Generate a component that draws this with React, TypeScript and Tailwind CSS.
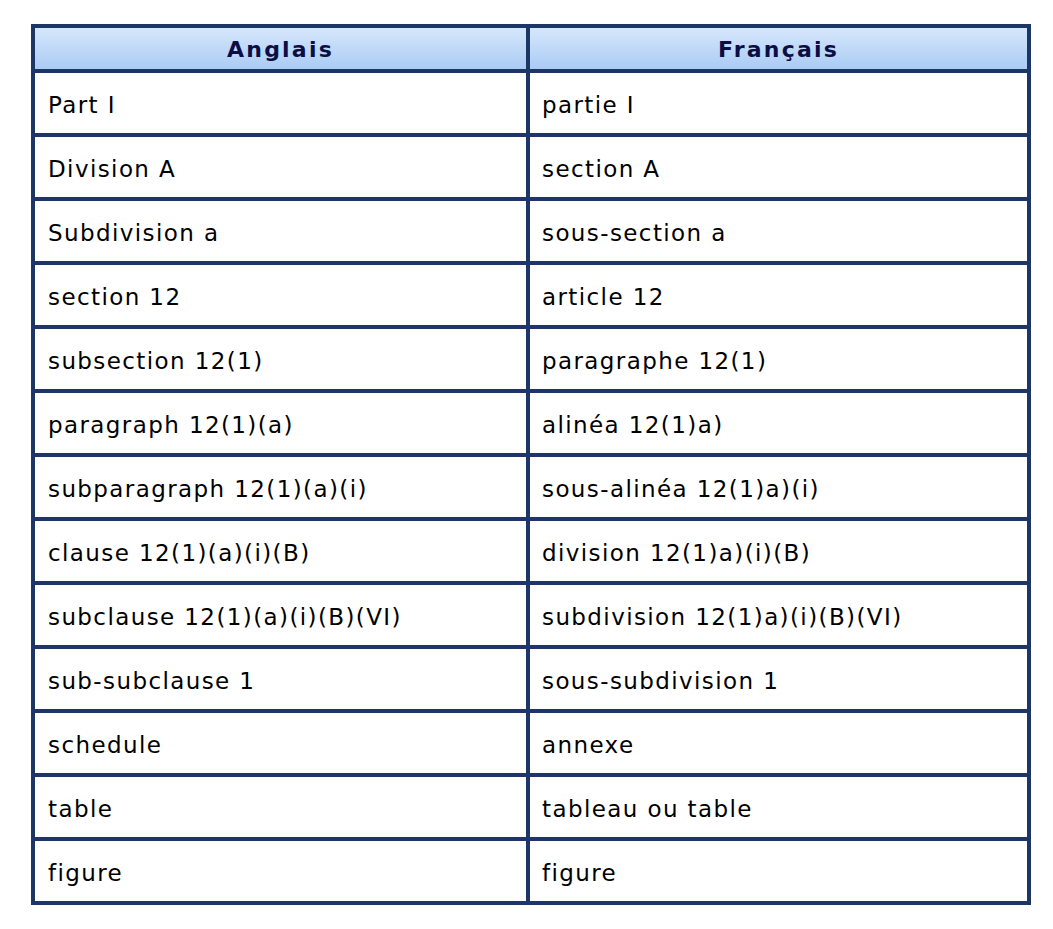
const rows: [string, string][] = [
  ['Part I', 'partie I'],
  ['Division A', 'section A'],
  ['Subdivision a', 'sous-section a'],
  ['section 12', 'article 12'],
  ['subsection 12(1)', 'paragraphe 12(1)'],
  ['paragraph 12(1)(a)', 'alinéa 12(1)a)'],
  ['subparagraph 12(1)(a)(i)', 'sous-alinéa 12(1)a)(i)'],
  ['clause 12(1)(a)(i)(B)', 'division 12(1)a)(i)(B)'],
  ['subclause 12(1)(a)(i)(B)(VI)', 'subdivision 12(1)a)(i)(B)(VI)'],
  ['sub-subclause 1', 'sous-subdivision 1'],
  ['schedule', 'annexe'],
  ['table', 'tableau ou table'],
  ['figure', 'figure'],
];

export default function App() {
  return (
    <div className="min-h-screen bg-white pl-[31px] pt-[24px] font-['DejaVu_Sans',Verdana,sans-serif]">
      <table className="w-[1000px] table-fixed border-collapse border-4 border-[#1c3765]">
        <thead>
          <tr className="h-[45px] bg-gradient-to-b from-[#d8e8fc] to-[#a8caf4]">
            <th className="w-[495px] border-4 border-[#1c3765] pt-[2px] text-center text-[22px] font-bold tracking-[2.2px] text-[#0d0d45]">
              Anglais
            </th>
            <th className="border-4 border-[#1c3765] pt-[2px] text-center text-[22px] font-bold tracking-[2.2px] text-[#0d0d45]">
              Français
            </th>
          </tr>
        </thead>
        <tbody>
          {rows.map(([en, fr]) => (
            <tr key={en} className="h-[64px]">
              <td className="border-4 border-[#1c3765] pl-[13px] pt-[4px] text-[23px] tracking-[1.4px] text-black">{en}</td>
              <td className="border-4 border-[#1c3765] pl-[12px] pt-[4px] text-[23px] tracking-[1.4px] text-black">{fr}</td>
            </tr>
          ))}
        </tbody>
      </table>
    </div>
  );
}
